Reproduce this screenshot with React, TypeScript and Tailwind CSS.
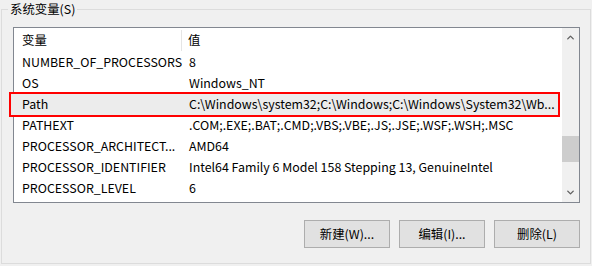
import { ChevronUp, ChevronDown } from 'lucide-react';

// System environment variables panel (Windows dialog style)
const ROWS: { name: string; value: string; marked?: boolean }[] = [
  { name: 'NUMBER_OF_PROCESSORS', value: '8' },
  { name: 'OS', value: 'Windows_NT' },
  { name: 'Path', value: 'C:\\Windows\\system32;C:\\Windows;C:\\Windows\\System32\\Wb...', marked: true },
  { name: 'PATHEXT', value: '.COM;.EXE;.BAT;.CMD;.VBS;.VBE;.JS;.JSE;.WSF;.WSH;.MSC' },
  { name: 'PROCESSOR_ARCHITECT...', value: 'AMD64' },
  { name: 'PROCESSOR_IDENTIFIER', value: 'Intel64 Family 6 Model 158 Stepping 13, GenuineIntel' },
  { name: 'PROCESSOR_LEVEL', value: '6' },
];

const font = { fontFamily: '"Noto Sans CJK SC", "Noto Sans", sans-serif' };

export default function App() {
  return (
    <div className="w-[592px] h-[266px] bg-[#f0f0f0] text-[12.4px] text-black overflow-hidden" style={font}>
      <div className="relative mt-[9px] ml-[1px] mr-[1px] h-[255px] border border-[#dcdcdc]">
        <span className="absolute -top-[10px] left-[6px] bg-[#f0f0f0] px-[2px] leading-[18px]">系统变量(S)</span>

        <div className="flex ml-[11px] mt-[17px] w-[567px] h-[176px] border border-[#828790] bg-white">
          <div className="flex-1 flex flex-col">
            <div className="flex h-[24px] items-center">
              <div className="w-[168px] pl-[8px] border-r border-[#e5e5e5] h-[21px] flex items-center">变量</div>
              <div className="pl-[6px]">值</div>
            </div>
            {ROWS.map(r => (
              <div
                key={r.name}
                className={`flex items-center h-[21px] whitespace-nowrap ${
                  r.marked ? 'bg-[#ececec] outline-2 outline-[#ff0000] -ml-[3px] pl-[3px] mr-[4px]' : ''
                }`}
              >
                <div className="w-[175px] pl-[8px]">{r.name}</div>
                <div>{r.value}</div>
              </div>
            ))}
          </div>
          <div className="w-[17px] bg-[#f0f0f0] flex flex-col items-center justify-between py-[4px]">
            <ChevronUp className="w-[11px] h-[11px] text-[#606060]" strokeWidth={3} />
            <div className="flex-1 w-full flex flex-col">
              <div className="h-[93px]" />
              <div className="h-[26px] bg-[#cdcdcd]" />
            </div>
            <ChevronDown className="w-[11px] h-[11px] text-[#606060]" strokeWidth={3} />
          </div>
        </div>

        <div className="flex justify-end gap-[9px] mt-[17px] mr-[10px]">
          {['新建(W)...', '编辑(I)...', '删除(L)'].map(b => (
            <button key={b} className="w-[86px] h-[28px] bg-[#e1e1e1] border border-[#adadad] text-[12.4px]">
              {b}
            </button>
          ))}
        </div>
      </div>
    </div>
  );
}
